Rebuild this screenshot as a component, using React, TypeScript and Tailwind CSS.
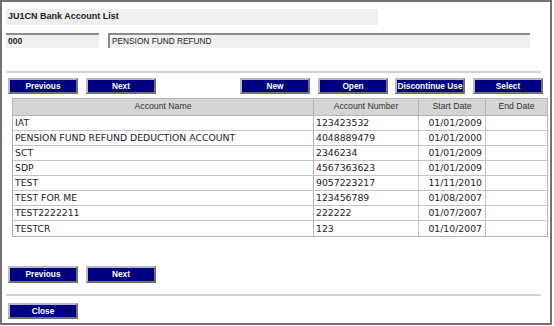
const rows = [
  { name: "IAT", number: "123423532", start: "01/01/2009" },
  { name: "PENSION FUND REFUND DEDUCTION ACCOUNT", number: "4048889479", start: "01/01/2000" },
  { name: "SCT", number: "2346234", start: "01/01/2009" },
  { name: "SDP", number: "4567363623", start: "01/01/2009" },
  { name: "TEST", number: "9057223217", start: "11/11/2010" },
  { name: "TEST FOR ME", number: "123456789", start: "01/08/2007" },
  { name: "TEST2222211", number: "222222", start: "01/07/2007" },
  { name: "TESTCR", number: "123", start: "01/10/2007" },
];

const NavButton = ({ label, className = "" }: { label: string; className?: string }) => {
  return (
    <div
      className={`w-[70px] h-[16px] flex items-center justify-center bg-[#000080] text-white font-bold text-[8.3px] leading-none border-2 border-t-[#b8b8c8] border-l-[#b8b8c8] border-b-[#707070] border-r-[#707070] whitespace-nowrap ${className}`}
    >
      {label}
    </div>
  );
};

export default function App() {
  return (
    <div className="w-[554px] h-[326px] bg-white font-['Liberation_Sans',Arial,sans-serif] text-[#222]">
      <div className="w-[552px] h-[325px] border-2 border-[#727272] flex flex-col pl-[4px]">
        {/* title */}
        <div className="mt-[7px] w-[372px] h-[16px] bg-[#efefef] flex items-center pl-[2px] text-[9px] font-bold text-[#222]">
          JU1CN Bank Account List
        </div>

        {/* fields */}
        <div className="mt-[8px] flex items-center gap-[9px]">
          <div className="w-[93px] h-[15px] bg-[#f0f0f0] border-t-2 border-[#8c8c8c] flex items-center pl-[2px] text-[8.5px] font-bold">
            000
          </div>
          <div className="w-[422px] h-[15px] bg-[#f0f0f0] border-t-2 border-l-2 border-[#8c8c8c] flex items-center pl-[2px] text-[8.3px]">
            PENSION FUND REFUND
          </div>
        </div>

        <div className="mt-[23px] w-[535px] h-[2px] bg-[#d2d2d2]" />

        {/* top buttons */}
        <div className="mt-[5px] ml-[2px] flex">
          <NavButton label="Previous" />
          <NavButton label="Next" className="ml-[8px]" />
          <NavButton label="New" className="ml-[84px]" />
          <NavButton label="Open" className="ml-[8px]" />
          <NavButton label="Discontinue Use" className="ml-[7px]" />
          <NavButton label="Select" className="ml-[8px]" />
        </div>

        {/* table */}
        <div className="mt-[4px] ml-[6px] w-[536px] border border-[#b4b4b4]">
          <div className="grid grid-cols-[301px_105px_67px_61px] h-[17px] bg-[#d5d5d5] text-[8.7px] text-[#333] border-b border-[#b4b4b4]">
            <div className="flex items-center justify-center border-r border-[#b4b4b4]">Account Name</div>
            <div className="flex items-center justify-center border-r border-[#b4b4b4]">Account Number</div>
            <div className="flex items-center justify-center border-r border-[#b4b4b4]">Start Date</div>
            <div className="flex items-center justify-center">End Date</div>
          </div>
          {rows.map((r, i) => (
            <div
              key={r.name}
              className={`grid grid-cols-[301px_105px_67px_61px] h-[15px] font-['DejaVu_Sans',Verdana,sans-serif] text-[9.3px] text-[#222] ${
                i < rows.length - 1 ? "border-b border-[#c4c4c4]" : ""
              }`}
            >
              <div className="flex items-center pl-[2px] border-r border-[#b4b4b4] whitespace-nowrap">{r.name}</div>
              <div className="flex items-center pl-[2px] border-r border-[#c4c4c4]">{r.number}</div>
              <div className="flex items-center justify-end pr-[3px] border-r border-[#c4c4c4]">{r.start}</div>
              <div />
            </div>
          ))}
        </div>

        {/* bottom buttons */}
        <div className="mt-[29px] ml-[2px] flex">
          <NavButton label="Previous" className="h-[17px]" />
          <NavButton label="Next" className="ml-[8px] h-[17px]" />
        </div>

        <div className="mt-[11px] w-[535px] h-[2px] bg-[#d2d2d2]" />

        <div className="mt-[7px] ml-[2px] flex">
          <NavButton label="Close" />
        </div>
      </div>
    </div>
  );
}
